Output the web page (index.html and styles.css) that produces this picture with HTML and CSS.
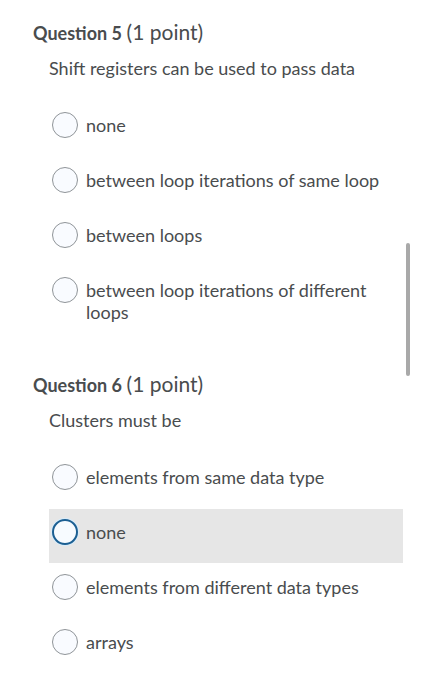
FILE: index.html
```html
<!DOCTYPE html>
<html lang="en">
<head>
<meta charset="utf-8">
<title>Quiz</title>
<link rel="stylesheet" href="styles.css">
</head>
<body>
<main class="quiz">
  <section class="question">
    <h2 class="q-title"><span class="q-num">Question 5</span> <span class="q-points">(1 point)</span></h2>
    <p class="q-prompt">Shift registers can be used to pass data</p>
    <ul class="options">
      <li class="option"><span class="radio"></span><span class="opt-text">none</span></li>
      <li class="option"><span class="radio"></span><span class="opt-text">between loop iterations of same loop</span></li>
      <li class="option"><span class="radio"></span><span class="opt-text">between loops</span></li>
      <li class="option"><span class="radio"></span><span class="opt-text">between loop iterations of different loops</span></li>
    </ul>
  </section>
  <section class="question">
    <h2 class="q-title"><span class="q-num">Question 6</span> <span class="q-points">(1 point)</span></h2>
    <p class="q-prompt">Clusters must be</p>
    <ul class="options">
      <li class="option"><span class="radio"></span><span class="opt-text">elements from same data type</span></li>
      <li class="option is-focused"><span class="radio"></span><span class="opt-text">none</span></li>
      <li class="option"><span class="radio"></span><span class="opt-text">elements from different data types</span></li>
      <li class="option"><span class="radio"></span><span class="opt-text">arrays</span></li>
    </ul>
  </section>
  <div class="scrollbar"></div>
</main>
</body>
</html>
```
FILE: styles.css
```css
* { box-sizing: border-box; }
html, body {
  margin: 0;
  padding: 0;
  background: #ffffff;
}
body {
  font-family: Lato, "Noto Sans", sans-serif;
  color: #494c4e;
}
.quiz {
  position: relative;
  width: 429px;
  min-height: 700px;
  padding: 20px 26px 0 33px;
}
.question + .question {
  margin-top: 31px;
}
.q-title {
  margin: 0;
  font-size: 18px;
  line-height: 24px;
  font-weight: 400;
}
.q-num {
  font-weight: 700;
}
.q-points {
  font-size: 21px;
  font-weight: 400;
}
.q-prompt {
  margin: 12px 0 0 16px;
  font-size: 18px;
  line-height: 22px;
}
.options {
  list-style: none;
  margin: 23px 0 0 16px;
  padding: 0;
}
.option {
  display: flex;
  align-items: flex-start;
  gap: 8px;
  padding: 10px 0 18px 3px;
  margin-bottom: 1px;
}
.option.is-focused {
  background: #e6e6e6;
}
.radio {
  flex: none;
  width: 26px;
  height: 26px;
  border-radius: 50%;
  border: 1px solid #8f9498;
  background: #f9fbff;
}
.is-focused .radio {
  border: 2.5px solid #1c5f92;
  background: #f7fbff;
  box-shadow: 0 0 0 1px #d8ecfa;
}
.opt-text {
  font-size: 18px;
  line-height: 22px;
  padding-top: 2px;
}
.scrollbar {
  position: absolute;
  left: 406px;
  top: 243px;
  width: 4px;
  height: 133px;
  border-radius: 2px;
  background: #a9a9a9;
}
```
